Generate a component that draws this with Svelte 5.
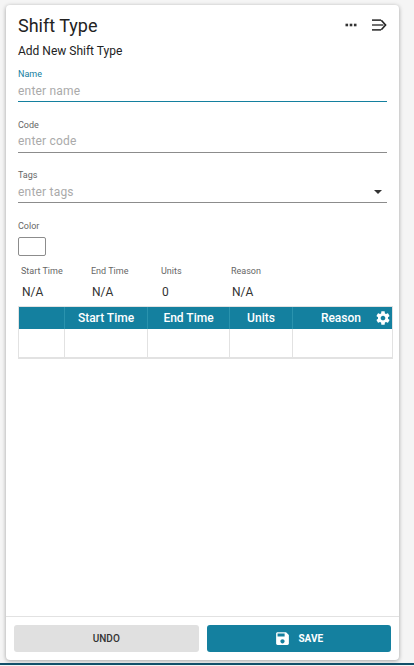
<script>
  const summary = [
    { label: 'Start Time', value: 'N/A', w: 70 },
    { label: 'End Time', value: 'N/A', w: 70 },
    { label: 'Units', value: '0', w: 70 },
    { label: 'Reason', value: 'N/A', w: 70 }
  ];
  const cols = [
    { label: '', cls: 'c0' },
    { label: 'Start Time', cls: 'c1' },
    { label: 'End Time', cls: 'c2' },
    { label: 'Units', cls: 'c3' },
    { label: 'Reason', cls: 'c4' }
  ];
</script>

<div class="page">
  <main class="card">
    <div class="body">
      <header class="head">
        <h1>Shift Type</h1>
        <div class="tools">
          <svg class="dots" viewBox="0 0 12 4" width="12" height="4"><rect x="0.5" y="0.7" width="2.6" height="2.6" fill="#333"/><rect x="4.7" y="0.7" width="2.6" height="2.6" fill="#333"/><rect x="8.9" y="0.7" width="2.6" height="2.6" fill="#333"/></svg>
          <svg class="collapse" viewBox="0 0 15 12" width="15" height="12"><path d="M0 1.2h9M0 6h11.5M0 10.8h9" stroke="#444" stroke-width="1.7" fill="none"/><path d="M9.3 1.2L13.6 6L9.3 10.8" stroke="#222" stroke-width="1.6" fill="none"/></svg>
        </div>
      </header>
      <h2>Add New Shift Type</h2>

      <div class="field focused">
        <span class="lab">Name</span>
        <div class="line"><span class="ph">enter name</span></div>
      </div>
      <div class="field">
        <span class="lab">Code</span>
        <div class="line"><span class="ph">enter code</span></div>
      </div>
      <div class="field">
        <span class="lab">Tags</span>
        <div class="line"><span class="ph">enter tags</span><i class="caret"></i></div>
      </div>

      <div class="color">
        <span class="lab">Color</span>
        <div class="swatch"></div>
      </div>

      <div class="summary">
        {#each summary as s}
          <div class="sum">
            <span class="sl">{s.label}</span>
            <span class="sv">{s.value}</span>
          </div>
        {/each}
      </div>

      <div class="table">
        <div class="row thead">
          {#each cols as c}
            <div class="cell {c.cls}">{c.label}</div>
          {/each}
          <svg class="gear" viewBox="0 0 24 24" width="16" height="16"><path fill="#fff" d="M19.43 12.98c.04-.32.07-.64.07-.98s-.03-.66-.07-.98l2.11-1.65c.19-.15.24-.42.12-.64l-2-3.46c-.12-.22-.39-.3-.61-.22l-2.49 1c-.52-.4-1.08-.73-1.69-.98l-.38-2.65C14.46 2.18 14.25 2 14 2h-4c-.25 0-.46.18-.49.42l-.38 2.65c-.61.25-1.17.59-1.69.98l-2.49-1c-.23-.09-.49 0-.61.22l-2 3.46c-.13.22-.07.49.12.64l2.11 1.65c-.04.32-.07.65-.07.98s.03.66.07.98l-2.11 1.65c-.19.15-.24.42-.12.64l2 3.46c.12.22.39.3.61.22l2.49-1c.52.4 1.08.73 1.69.98l.38 2.65c.03.24.24.42.49.42h4c.25 0 .46-.18.49-.42l.38-2.65c.61-.25 1.17-.59 1.69-.98l2.49 1c.23.09.49 0 .61-.22l2-3.46c.12-.22.07-.49-.12-.64l-2.11-1.65zM12 15.5c-1.93 0-3.5-1.57-3.5-3.5s1.57-3.5 3.5-3.5 3.5 1.57 3.5 3.5-1.57 3.5-3.5 3.5z"/></svg>
        </div>
        <div class="row tbody">
          {#each cols as c}
            <div class="cell {c.cls}"></div>
          {/each}
        </div>
      </div>
    </div>

    <footer class="foot">
      <button class="btn undo">UNDO</button>
      <button class="btn save">
        <svg viewBox="0 0 24 24" width="17" height="17"><path fill="#fff" d="M17 3H5c-1.11 0-2 .9-2 2v14c0 1.1.89 2 2 2h14c1.1 0 2-.9 2-2V7l-4-4zm-5 16c-1.66 0-3-1.34-3-3s1.34-3 3-3 3 1.34 3 3-1.34 3-3 3zm3-10H5V5h10v4z"/></svg>
        SAVE
      </button>
    </footer>
  </main>
  <div class="strip"></div>
</div>

<style>
  :global(body) { margin: 0; background: #f5f5f5; }
  .page {
    width: 414px;
    height: 666px;
    overflow: hidden;
    padding-top: 5px;
    box-sizing: border-box;
    font-family: Roboto, sans-serif;
    display: flex;
    flex-direction: column;
    background: #f5f5f5;
  }
  .card {
    margin-left: 6px;
    width: 393px;
    height: 655px;
    flex: none;
    background: #fff;
    border-radius: 4px;
    box-shadow: 0 1px 4px rgba(0,0,0,.35);
    display: flex;
    flex-direction: column;
  }
  .strip { height: 2px; margin-top: 3px; background: #12506a; flex: none; }
  .body { flex: 1; padding: 0 12px; }
  .head { display: flex; justify-content: space-between; align-items: center; height: 40px; }
  h1 { margin: 0; font-weight: 400; font-size: 18px; color: #222; }
  .tools { display: flex; align-items: center; gap: 15px; margin-right: 0; }
  h2 { margin: -1px 0 0; font-weight: 400; font-size: 12px; line-height: 14px; color: #222; }
  .field { height: 50.5px; }
  .field:first-of-type { margin-top: 0; }
  .lab { display: block; font-size: 9px; line-height: 11px; color: #666; padding-top: 11px; }
  .line {
    height: 21px;
    border-bottom: 1px solid #8c8c8c;
    display: flex;
    align-items: center;
    justify-content: space-between;
  }
  .focused .lab { color: #14809f; }
  .focused .line { border-bottom-color: #14809f; }
  .ph { font-size: 12px; color: #aaa; letter-spacing: .2px; }
  .caret { width: 0; height: 0; border: 4px solid transparent; border-top: 4px solid #333; border-bottom: 0; margin-right: 5px; }
  .color { height: 56px; }
  .swatch { width: 26px; height: 17px; border: 1px solid #8c8c8c; border-radius: 2px; margin-top: 5px; }
  .summary { display: flex; padding-left: 3px; }
  .sum { width: 70px; display: flex; flex-direction: column; }
  .sl { font-size: 9px; line-height: 11px; color: #666; }
  .sv { font-size: 12px; line-height: 14px; color: #333; margin-top: 8px; padding-left: 1px; }
  .table { margin-top: 7px; width: 375px; border: 1px solid #e2e2e2; border-bottom-width: 2px; box-sizing: border-box; }
  .row { display: flex; position: relative; }
  .thead { height: 22px; background: #14809f; color: #fff; font-size: 12px; font-weight: 500; }
  .tbody { height: 28px; }
  .cell { box-sizing: border-box; display: flex; align-items: center; justify-content: center; border-right: 1px solid #e2e2e2; }
  .thead .cell { border-right-color: #2a93ae; }
  .c0 { width: 46px; }
  .c1 { width: 83px; }
  .c2 { width: 82px; }
  .c3 { width: 63px; }
  .c4 { flex: 1; border-right: 0; justify-content: flex-end; padding-right: 31px; }
  .gear { position: absolute; right: 1px; top: 3px; }
  .foot {
    border-top: 1px solid #e2e2e2;
    padding: 8px 8px 8px;
    display: flex;
    gap: 8px;
  }
  .btn {
    flex: 1;
    height: 27px;
    border: 0;
    border-radius: 3px;
    font-family: Roboto, sans-serif;
    font-size: 10px;
    font-weight: 500;
    display: flex;
    align-items: center;
    justify-content: center;
    gap: 7px;
    padding: 0;
  }
  .undo { background: #e0e0e0; color: #333; }
  .save { background: #14809f; color: #fff; font-weight: 700; }
</style>
